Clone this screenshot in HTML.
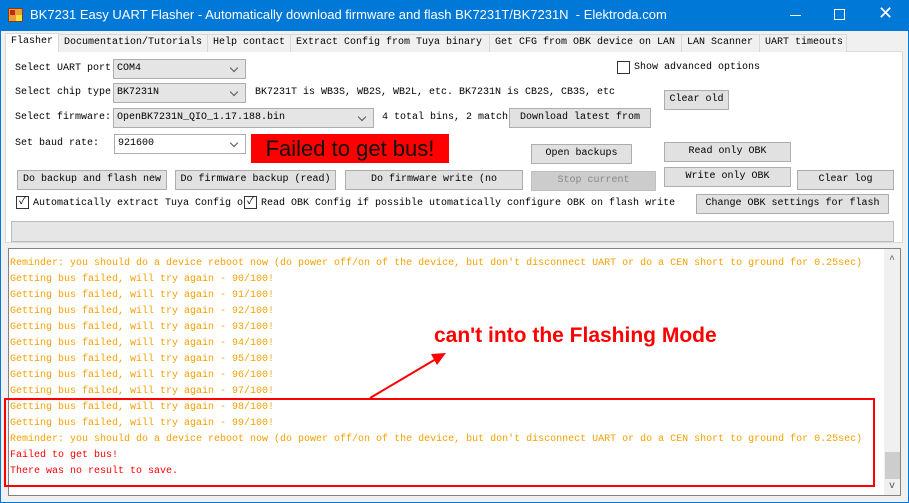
<!DOCTYPE html>
<html><head><meta charset="utf-8"><style>
*{margin:0;padding:0;box-sizing:border-box}
body{width:909px;height:503px;position:relative;overflow:hidden;background:#f0f0f0;font-family:"Liberation Mono","Noto Sans CJK SC",monospace;font-size:10px;color:#000}
.a{position:absolute;white-space:nowrap}
#tb{left:0;top:0;width:909px;height:31px;background:#0078d7;color:#fff;font-family:"Liberation Sans","Noto Sans CJK SC",sans-serif;font-size:13px}
.tab{top:34px;height:18px;border:1px solid #d9d9d9;border-bottom:none;background:#f0f0f0;line-height:16px;padding-left:5px}
#panel{left:5px;top:51px;width:898px;height:192px;background:#fff;border:1px solid #d9d9d9}
.lbl{line-height:14px}
.cb{height:20px;border:1px solid #adadad;background:#e5e5e5;line-height:18px;padding-left:3px}
.cb:after{content:"";position:absolute;right:8px;top:5px;width:5px;height:5px;border-right:1px solid #555;border-bottom:1px solid #555;transform:rotate(45deg)}
.btn{height:20px;border:1px solid #adadad;background:#e1e1e1;line-height:18px;text-align:center}
.chk{width:13px;height:13px;border:1px solid #333;background:#fff}
.log{left:10px;line-height:16px;font-size:10px}
.o{color:#f5a000}.r{color:#f00}
</style></head><body>
<div id="tb" class="a">
<div class="a" style="left:8px;top:8px;width:15px;height:14px;background:#e8a030;border:1px solid #804020"><div class="a" style="left:1px;top:1px;width:5px;height:5px;background:#d02020"></div><div class="a" style="left:7px;top:6px;width:6px;height:6px;background:#f8e040"></div></div>
<div class="a" style="left:30px;top:7px">BK7231 Easy UART Flasher - Automatically download firmware and flash BK7231T/BK7231N&nbsp; - Elektroda.com</div>
<div class="a" style="left:790px;top:15px;width:11px;height:1px;background:#fff"></div>
<div class="a" style="left:834px;top:9px;width:11px;height:11px;border:1px solid #fff"></div>
<div class="a" style="left:878px;top:3px;font-size:18px">✕</div>
</div>
<div class="a" style="left:0;top:31px;width:1px;height:472px;background:#0078d7"></div>
<div class="a" style="left:908px;top:31px;width:1px;height:472px;background:#0078d7"></div>
<div class="a" style="left:0;top:502px;width:909px;height:1px;background:#0078d7"></div>
<div id="panel" class="a"></div>
<div class="a tab" style="left:5px;top:33px;width:54px;height:19px;background:#fff;z-index:2">Flasher</div>
<div class="a tab" style="left:58px;width:150px">Documentation/Tutorials</div>
<div class="a tab" style="left:207px;width:84px">Help contact</div>
<div class="a tab" style="left:290px;width:200px">Extract Config from Tuya binary</div>
<div class="a tab" style="left:489px;width:193px">Get CFG from OBK device on LAN</div>
<div class="a tab" style="left:681px;width:79px">LAN Scanner</div>
<div class="a tab" style="left:759px;width:88px">UART timeouts</div>

<div class="a lbl" style="left:15px;top:62px">Select UART port</div>
<div class="a cb" style="left:113px;top:59px;width:133px">COM4</div>
<div class="a chk" style="left:617px;top:61px"></div>
<div class="a lbl" style="left:634px;top:61px">Show advanced options</div>

<div class="a lbl" style="left:15px;top:86px">Select chip type</div>
<div class="a cb" style="left:113px;top:83px;width:133px">BK7231N</div>
<div class="a lbl" style="left:255px;top:86px">BK7231T is WB3S, WB2S, WB2L, etc. BK7231N is CB2S, CB3S, etc</div>
<div class="a btn" style="left:664px;top:90px;width:65px">Clear old</div>

<div class="a lbl" style="left:15px;top:111px">Select firmware:</div>
<div class="a cb" style="left:113px;top:108px;width:261px">OpenBK7231N_QIO_1.17.188.bin</div>
<div class="a lbl" style="left:382px;top:111px">4 total bins, 2 match</div>
<div class="a btn" style="left:509px;top:108px;width:142px">Download latest from</div>

<div class="a lbl" style="left:15px;top:137px">Set baud rate:</div>
<div class="a cb" style="left:114px;top:134px;width:132px;background:#fff">921600</div>
<div class="a" style="left:251px;top:134px;width:198px;height:29px;background:#f00;font-family:'Liberation Sans',sans-serif;font-size:22px;line-height:29px;text-align:center;color:#111">Failed to get bus!</div>
<div class="a btn" style="left:531px;top:144px;width:101px">Open backups</div>
<div class="a btn" style="left:664px;top:142px;width:127px">Read only OBK</div>

<div class="a btn" style="left:17px;top:170px;width:150px">Do backup and flash new</div>
<div class="a btn" style="left:175px;top:170px;width:161px">Do firmware backup (read)</div>
<div class="a btn" style="left:345px;top:170px;width:178px">Do firmware write (no</div>
<div class="a btn" style="left:531px;top:171px;width:125px;background:#ccc;color:#888;border-color:#bfbfbf">Stop current</div>
<div class="a btn" style="left:664px;top:167px;width:127px">Write only OBK</div>
<div class="a btn" style="left:797px;top:170px;width:97px">Clear log</div>

<div class="a chk" style="left:16px;top:196px;font-size:10px;line-height:11px;text-align:center">✓</div>
<div class="a lbl" style="left:33px;top:197px;width:210px;overflow:hidden">Automatically extract Tuya Config o</div>
<div class="a chk" style="left:244px;top:196px;font-size:10px;line-height:11px;text-align:center">✓</div>
<div class="a lbl" style="left:261px;top:197px">Read OBK Config if possible utomatically configure OBK on flash write</div>
<div class="a btn" style="left:696px;top:194px;width:193px">Change OBK settings for flash</div>

<div class="a" style="left:11px;top:221px;width:883px;height:21px;background:#e6e6e6;border:1px solid #bcbcbc"></div>

<div class="a" style="left:8px;top:248px;width:893px;height:248px;background:#fff;border:1px solid #828282;overflow:hidden">
<div class="a" style="left:875px;top:0;width:17px;height:246px;background:#f0f0f0"></div>
<div class="a" style="left:880px;top:6px;font-size:10px;color:#555">^</div>
<div class="a" style="left:876px;top:203px;width:15px;height:27px;background:#cdcdcd"></div>
<div class="a" style="left:880px;top:232px;font-size:10px;color:#555">v</div>
<div class="a" style="left:2px;top:-13px;line-height:16px;color:#f5a000">Getting bus failed, will try again - 89/100!</div>
</div>
<div class="a log o" style="top:256px">Reminder: you should do a device reboot now (do power off/on of the device, but don't disconnect UART or do a CEN short to ground for 0.25sec)</div>
<div class="a log o" style="top:272px">Getting bus failed, will try again - 90/100!</div>
<div class="a log o" style="top:288px">Getting bus failed, will try again - 91/100!</div>
<div class="a log o" style="top:304px">Getting bus failed, will try again - 92/100!</div>
<div class="a log o" style="top:320px">Getting bus failed, will try again - 93/100!</div>
<div class="a log o" style="top:336px">Getting bus failed, will try again - 94/100!</div>
<div class="a log o" style="top:352px">Getting bus failed, will try again - 95/100!</div>
<div class="a log o" style="top:368px">Getting bus failed, will try again - 96/100!</div>
<div class="a log o" style="top:384px">Getting bus failed, will try again - 97/100!</div>
<div class="a log o" style="top:400px">Getting bus failed, will try again - 98/100!</div>
<div class="a log o" style="top:416px">Getting bus failed, will try again - 99/100!</div>
<div class="a log o" style="top:432px">Reminder: you should do a device reboot now (do power off/on of the device, but don't disconnect UART or do a CEN short to ground for 0.25sec)</div>
<div class="a log r" style="top:448px">Failed to get bus!</div>
<div class="a log r" style="top:464px">There was no result to save.</div>

<div class="a" style="left:4px;top:398px;width:871px;height:89px;border:2px solid #f00"></div>
<div class="a" style="left:434px;top:324px;font-family:'Liberation Sans',sans-serif;font-weight:bold;font-size:21px;color:#f00">can't into the Flashing Mode</div>
<svg class="a" style="left:0;top:0" width="909" height="503"><line x1="370" y1="398" x2="436" y2="359" stroke="#f00" stroke-width="2"/><polygon points="446,353 431,354 437,365" fill="#f00"/></svg>
</body></html>
